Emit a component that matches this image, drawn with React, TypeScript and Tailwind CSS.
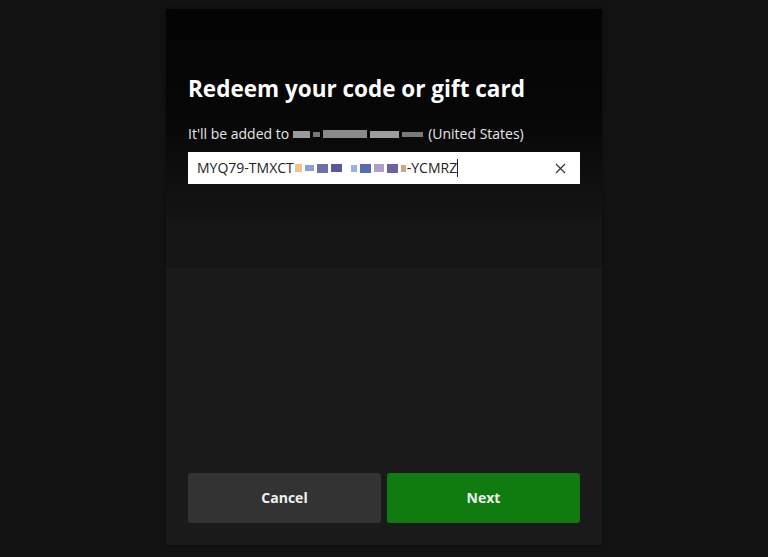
import React from "react";

export default function App() {
  return (
    <div className="w-[768px] h-[557px] bg-[#131313] flex justify-center overflow-hidden" style={{ fontFamily: '"Open Sans", "Noto Sans", sans-serif' }}>
      <div className="w-[436px] mt-[9px] h-[536px] flex flex-col shadow-[0_0_6px_rgba(0,0,0,0.4)]">
        <div className="h-[214px] bg-gradient-to-b from-[#040404] via-[#070707] to-[#151515] px-[22px] pt-[64px] flex flex-col">
          <h1 className="text-white text-[22.5px] font-bold leading-[32px]">Redeem your code or gift card</h1>
          <div className="mt-[19px] text-[#e6e6e6] text-[14px] leading-[20px] flex items-center">
            <span>It'll be added to</span>
            <span className="ml-[4px] inline-flex items-center gap-[3px] blur-[0.7px]">
              <span className="w-[17px] h-[7px] bg-[#9a9a9a]" />
              <span className="w-[7px] h-[5px] bg-[#777]" />
              <span className="w-[44px] h-[8px] bg-[#8a8a8a]" />
              <span className="w-[29px] h-[7px] bg-[#9c9c9c]" />
              <span className="w-[21px] h-[5px] bg-[#7a7a7a]" />
            </span>
            <span className="ml-[5px]">(United States)</span>
          </div>
          <div className="mt-[8px] h-[32px] bg-white flex items-center pl-[9px] pr-[14px]">
            <span className="text-[#222] text-[14px] leading-[20px]">MYQ79-TMXCT</span>
            <span className="inline-flex items-center gap-[3px] blur-[0.6px] mx-[1px]">
              <span className="w-[7px] h-[8px] bg-[#f0c090]" />
              <span className="w-[9px] h-[6px] bg-[#8aa0d8]" />
              <span className="w-[11px] h-[9px] bg-[#6a70a8]" />
              <span className="w-[11px] h-[8px] bg-[#5a5a9a]" />
              <span className="w-[3px]" />
              <span className="w-[6px] h-[7px] bg-[#9ab0e0]" />
              <span className="w-[11px] h-[9px] bg-[#5a6ab0]" />
              <span className="w-[10px] h-[8px] bg-[#b0a0c8]" />
              <span className="w-[11px] h-[9px] bg-[#7060a0]" />
              <span className="w-[5px] h-[7px] bg-[#d0a880]" />
            </span>
            <span className="text-[#222] text-[14px] leading-[20px]">-YCMRZ</span>
            <span className="w-[1px] h-[18px] bg-[#222]" />
            <span className="flex-1" />
            <svg width="11" height="11" viewBox="0 0 11 11" className="text-[#333]">
              <path d="M1 1L10 10M10 1L1 10" stroke="currentColor" strokeWidth="1.2" />
            </svg>
          </div>
        </div>
        <div className="h-[45px] bg-[#161616]" />
        <div className="flex-1 bg-[#1a1a1a] px-[22px] pb-[22px] flex flex-col justify-end">
          <div className="flex gap-[6px]">
            <button className="flex-1 h-[50px] rounded-[3px] bg-[#333333] text-[#f0f0f0] text-[14px] font-bold leading-[20px]">Cancel</button>
            <button className="flex-1 h-[50px] rounded-[3px] bg-[#107c10] text-[#f0f0f0] text-[14px] font-bold leading-[20px]">Next</button>
          </div>
        </div>
      </div>
    </div>
  );
}
